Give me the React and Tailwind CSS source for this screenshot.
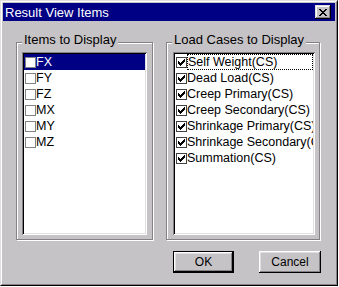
import React from "react";

function CloseGlyph() {
  const rows = [
    [[0, 2], [6, 2]],
    [[1, 2], [5, 2]],
    [[2, 4]],
    [[3, 2]],
    [[2, 4]],
    [[1, 2], [5, 2]],
    [[0, 2], [6, 2]],
  ];
  return (
    <svg width="8" height="7" viewBox="0 0 8 7" shapeRendering="crispEdges">
      {rows.map((r, y) =>
        r.map(([x, w], i) => <rect key={y + "-" + i} x={x} y={y} width={w} height={1} fill="#000" />)
      )}
    </svg>
  );
}

function CheckGlyph() {
  const rows = [
    [[6, 1]],
    [[5, 2]],
    [[0, 1], [4, 3]],
    [[0, 2], [3, 3]],
    [[0, 5]],
    [[1, 3]],
    [[2, 1]],
  ];
  return (
    <svg width="7" height="7" viewBox="0 0 7 7" shapeRendering="crispEdges">
      {rows.map((r, y) =>
        r.map(([x, w], i) => <rect key={y + "-" + i} x={x} y={y} width={w} height={1} fill="#000" />)
      )}
    </svg>
  );
}

function Box({ checked }) {
  return (
    <span
      className={
        checked
          ? "w-[11px] h-[11px] mt-[3px] ml-[1px] shrink-0 border border-[#424142] bg-white flex items-center justify-center"
          : "w-[11px] h-[11px] mt-[3px] ml-[1px] shrink-0 border border-[#848284] bg-white flex items-center justify-center"
      }
    >
      {checked && <CheckGlyph />}
    </span>
  );
}

function Row({ label, checked, selected, focused }) {
  return (
    <div className={selected ? "flex items-start h-[16px] bg-[#000084] text-white" : "flex items-start h-[16px] text-black"}>
      <Box checked={checked} />
      <span
        className={
          focused
            ? "flex-1 min-w-0 h-[16px] overflow-hidden whitespace-nowrap text-[12.5px] leading-[16px] outline-1 outline-dotted outline-black -outline-offset-1 pl-[1px]"
            : "flex-1 min-w-0 h-[16px] overflow-hidden whitespace-nowrap text-[12.5px] leading-[16px]"
        }
      >
        {label}
      </span>
    </div>
  );
}

const sunken =
  "bg-white p-[2px] shadow-[inset_1px_1px_0_#848284,inset_-1px_-1px_0_#fff,inset_2px_2px_0_#000,inset_-2px_-2px_0_#dfdfdf]";

export default function App() {
  const items = ["FX", "FY", "FZ", "MX", "MY", "MZ"];
  const cases = [
    "Self Weight(CS)",
    "Dead Load(CS)",
    "Creep Primary(CS)",
    "Creep Secondary(CS)",
    "Shrinkage Primary(CS)",
    "Shrinkage Secondary(CS)",
    "Summation(CS)",
  ];
  return (
    <div className="w-[339px] h-[287px] bg-white font-['Liberation_Sans',Arial,sans-serif]">
      <div className="w-[338px] h-[286px] border border-t-[#dfdfdf] border-l-[#dfdfdf] border-r-black border-b-black bg-[#c6c3c6]">
        <div className="h-full border border-t-white border-l-white border-r-[#848284] border-b-[#848284] p-px flex flex-col">
          <div className="h-[18px] shrink-0 bg-[#000084] flex items-center justify-between pl-[2px] pr-[4px]">
            <span className="text-white text-[13px] leading-[15px]">Result View Items</span>
            <div className="w-[16px] h-[14px] bg-[#c6c3c6] flex items-center justify-center shadow-[inset_-1px_-1px_0_#000,inset_1px_1px_0_#dfdfdf,inset_-2px_-2px_0_#848284,inset_2px_2px_0_#fff]">
              <CloseGlyph />
            </div>
          </div>

          <div className="flex pl-[13px] mt-[21px] gap-[13px]">
            <div className="relative w-[137px] h-[198px] border border-[#848284] shadow-[inset_1px_1px_0_#fff,1px_1px_0_#fff] pl-[5px] pt-[9px]">
              <span className="absolute left-[5px] top-[-11px] px-[2px] bg-[#c6c3c6] text-[13px] leading-[15px] text-black">
                Items to Display
              </span>
              <div className={"w-[125px] h-[183px] " + sunken}>
                {items.map((it, i) => (
                  <Row key={it} label={it} checked={false} selected={i === 0} />
                ))}
              </div>
            </div>

            <div className="relative w-[154px] h-[198px] border border-[#848284] shadow-[inset_1px_1px_0_#fff,1px_1px_0_#fff] pl-[6px] pt-[9px]">
              <span className="absolute left-[5px] top-[-11px] px-[2px] bg-[#c6c3c6] text-[13px] leading-[15px] text-black">
                Load Cases to Display
              </span>
              <div className={"w-[142px] h-[183px] " + sunken}>
                {cases.map((c, i) => (
                  <Row key={c} label={c} checked={true} focused={i === 0} />
                ))}
              </div>
            </div>
          </div>

          <div className="flex justify-end gap-[25px] mt-[11px] pr-[14px]">
            <button className="w-[61px] h-[22px] border border-black bg-[#c6c3c6] text-[12px] text-black leading-[14px] flex items-center justify-center shadow-[inset_-1px_-1px_0_#000,inset_1px_1px_0_#fff,inset_-2px_-2px_0_#848284,inset_2px_2px_0_#dfdfdf]">
              OK
            </button>
            <button className="w-[62px] h-[22px] bg-[#c6c3c6] text-[12px] text-black leading-[14px] flex items-center justify-center shadow-[inset_-1px_-1px_0_#000,inset_1px_1px_0_#fff,inset_-2px_-2px_0_#848284,inset_2px_2px_0_#dfdfdf]">
              Cancel
            </button>
          </div>
        </div>
      </div>
    </div>
  );
}
